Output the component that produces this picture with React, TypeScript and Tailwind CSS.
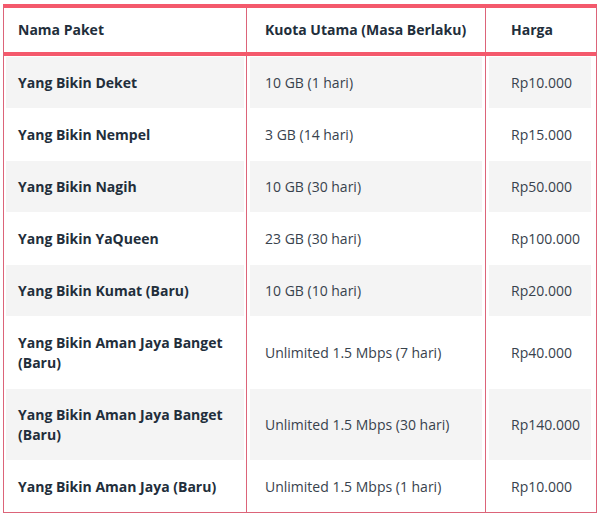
import React from "react";

type Row = { name: string; quota: string; price: string };

const rows: Row[] = [
  { name: "Yang Bikin Deket", quota: "10 GB (1 hari)", price: "Rp10.000" },
  { name: "Yang Bikin Nempel", quota: "3 GB (14 hari)", price: "Rp15.000" },
  { name: "Yang Bikin Nagih", quota: "10 GB (30 hari)", price: "Rp50.000" },
  { name: "Yang Bikin YaQueen", quota: "23 GB (30 hari)", price: "Rp100.000" },
  { name: "Yang Bikin Kumat (Baru)", quota: "10 GB (10 hari)", price: "Rp20.000" },
  { name: "Yang Bikin Aman Jaya Banget (Baru)", quota: "Unlimited 1.5 Mbps (7 hari)", price: "Rp40.000" },
  { name: "Yang Bikin Aman Jaya Banget (Baru)", quota: "Unlimited 1.5 Mbps (30 hari)", price: "Rp140.000" },
  { name: "Yang Bikin Aman Jaya (Baru)", quota: "Unlimited 1.5 Mbps (1 hari)", price: "Rp10.000" },
];

export default function App() {
  return (
    <div
      className="w-[600px] h-[519px] bg-white pt-[4px] pl-[3px]"
      style={{ fontFamily: '"Open Sans", "Noto Sans", sans-serif' }}
    >
      <div className="w-[594px] border-t-[4px] border-t-[#f4596c] border-x border-b border-x-[#dc6479] border-b-[#dc6479] text-[14px] leading-[20px]">
        {/* Header */}
        <div className="flex border-b-[4px] border-b-[#f4596c] font-bold text-[#222e3b]">
          <div className="w-[243px] shrink-0 border-r border-r-[#dc6479] px-[2px]">
            <div className="pl-[12px] pt-[12px] pb-[12px]">Nama Paket</div>
          </div>
          <div className="w-[239px] shrink-0 border-r border-r-[#dc6479] px-[3px]">
            <div className="pl-[15px] pt-[12px] pb-[12px]">Kuota Utama (Masa Berlaku)</div>
          </div>
          <div className="flex-1 pl-[3px] pr-[5px]">
            <div className="pl-[22px] pt-[12px] pb-[12px]">Harga</div>
          </div>
        </div>
        {rows.map((r, i) => {
          const bg = i % 2 === 0 ? "bg-[#f4f4f4]" : "bg-white";
          return (
            <div key={i} className="flex">
              <div className="w-[243px] shrink-0 border-r border-r-[#dc6479] px-[2px] pt-[1px] flex">
                <div className={`flex-1 ${bg} pl-[12px] pr-[10px] pt-[16px] pb-[15px] font-bold text-[#222e3b]`}>
                  {r.name}
                </div>
              </div>
              <div className="w-[239px] shrink-0 border-r border-r-[#dc6479] px-[3px] pt-[1px] flex">
                <div className={`flex-1 ${bg} pl-[15px] flex items-center text-[#38424d]`}>
                  {r.quota}
                </div>
              </div>
              <div className="flex-1 pl-[3px] pr-[5px] pt-[1px] flex">
                <div className={`flex-1 ${bg} pl-[22px] flex items-center text-[#38424d]`}>
                  {r.price}
                </div>
              </div>
            </div>
          );
        })}
      </div>
    </div>
  );
}
